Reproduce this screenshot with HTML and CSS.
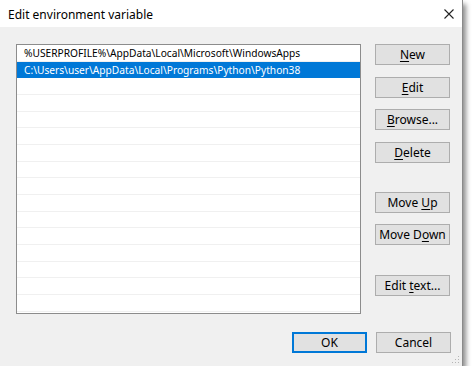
FILE: index.html
```html
<!DOCTYPE html>
<html lang="en">
<head>
    <meta charset="UTF-8">
    <title>Edit environment variable</title>
    <link rel="stylesheet" href="styles.css">
</head>
<body>
    <div class="window">
        <div class="titlebar">
            <span class="title">Edit environment variable</span>
            <svg class="close" width="10" height="10" viewBox="0 0 10 10">
                <path d="M0.5 0.5 L9.5 9.5 M9.5 0.5 L0.5 9.5" stroke="#222" stroke-width="1.1" fill="none"/>
            </svg>
        </div>
        <div class="body">
            <div class="main">
                <div class="list">
                    <div class="row">%USERPROFILE%\AppData\Local\Microsoft\WindowsApps</div>
                    <div class="row selected">C:\Users\user\AppData\Local\Programs\Python\Python38</div>
                    <div class="row"></div>
                    <div class="row"></div>
                    <div class="row"></div>
                    <div class="row"></div>
                    <div class="row"></div>
                    <div class="row"></div>
                    <div class="row"></div>
                    <div class="row"></div>
                    <div class="row"></div>
                    <div class="row"></div>
                    <div class="row"></div>
                    <div class="row"></div>
                    <div class="row"></div>
                    <div class="row"></div>
                </div>
                <div class="side">
                    <button class="btn"><u>N</u>ew</button>
                    <button class="btn"><u>E</u>dit</button>
                    <button class="btn"><u>B</u>rowse...</button>
                    <button class="btn"><u>D</u>elete</button>
                    <button class="btn group">Move <u>U</u>p</button>
                    <button class="btn">Move D<u>o</u>wn</button>
                    <button class="btn group">Edit <u>t</u>ext...</button>
                </div>
            </div>
            <div class="footer">
                <button class="btn default">OK</button>
                <button class="btn">Cancel</button>
            </div>
            <div class="grip"></div>
        </div>
    </div>
</body>
</html>
```

FILE: styles.css
```css
body {
    margin: 0;
    padding: 0;
    background: #fff;
    font-family: "Noto Sans", "Open Sans", sans-serif;
    font-size: 12px;
    color: #000;
}
.window {
    width: 462px;
    height: 366px;
    background: #f0f0f0;
    border-right: 1px solid #8a8a8a;
    box-shadow: 3px 4px 5px rgba(0, 0, 0, 0.45);
    display: flex;
    flex-direction: column;
}
.titlebar {
    height: 27px;
    background: #fff;
    display: flex;
    align-items: center;
    justify-content: space-between;
    padding: 0 8px;
    flex-shrink: 0;
}
.title {
    padding-top: 1px;
}
.body {
    flex: 1;
    position: relative;
    padding: 17px 12px 0 16px;
}
.main {
    display: flex;
}
.list {
    width: 343px;
    height: 268px;
    background: #fff;
    border: 1px solid #8c8c8c;
    overflow: hidden;
}
.row {
    height: 16.67px;
    line-height: 16px;
    padding-left: 7px;
    box-sizing: border-box;
    border-bottom: 1px solid #f0f0f0;
    white-space: nowrap;
    font-size: 10.2px;
}
.row.selected {
    background: #0078d7;
    color: #fff;
    border-bottom-color: #0078d7;
}
.side {
    display: flex;
    flex-direction: column;
    margin-left: 14px;
}
.btn {
    width: 75px;
    height: 21px;
    padding: 0;
    margin-top: 0;
    margin-bottom: 11.6px;
    background: #e1e1e1;
    border: 1px solid #adadad;
    font-family: inherit;
    font-size: 12px;
    color: #000;
}
.btn.group {
    margin-top: 17.5px;
}
.btn u {
    text-decoration-thickness: 1px;
    text-underline-offset: 2px;
}
.footer {
    display: flex;
    justify-content: flex-end;
    gap: 9px;
    padding-top: 18px;
    margin-right: -1px;
}
.footer .btn {
    margin: 0;
}
.btn.default {
    border: 1px solid #0078d7;
    box-shadow: inset 0 0 0 1px #0078d7;
}
.grip {
    position: absolute;
    right: 3px;
    bottom: 3px;
    width: 8px;
    height: 8px;
    background-image: radial-gradient(circle, #b5b5b5 0.8px, transparent 1px);
    background-size: 3px 3px;
    clip-path: polygon(100% 0, 100% 100%, 0 100%);
}
```
